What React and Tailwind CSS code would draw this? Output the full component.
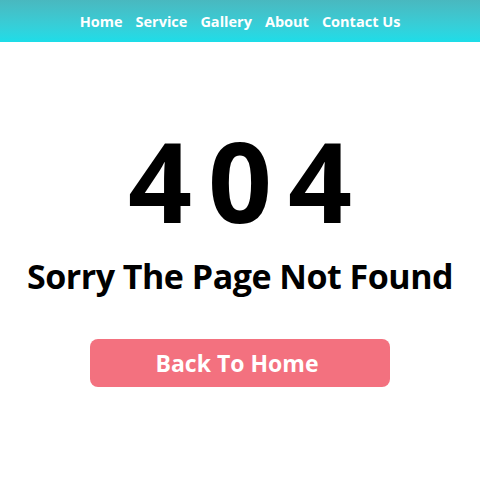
const navLinks = ["Home", "Service", "Gallery", "About", "Contact Us"];

export default function App() {
  return (
    <div className="min-h-[480px] bg-white font-['Open_Sans',sans-serif]">
      <header className="flex h-[42px] items-center justify-center gap-[13px] bg-gradient-to-b from-[#49b8bf] to-[#1cdde8] pt-[2px]">
        {navLinks.map((link) => (
          <a key={link} href="#" className="text-[14.5px] font-bold text-white">
            {link}
          </a>
        ))}
      </header>

      <main className="flex flex-col items-center">
        <h1 className="mt-[76px] pl-[16px] text-[112px] font-bold leading-[124px] tracking-[16px] text-black">
          404
        </h1>
        <h2 className="mt-[12px] text-[34px] font-bold leading-[44px] tracking-[-0.5px] text-black">
          Sorry The Page Not Found
        </h2>
        <button
          type="button"
          className="mt-[41px] flex h-[48px] w-[300px] items-center justify-center rounded-[8px] bg-[#f3717f] pr-[6px] text-[23px] font-bold text-white"
        >
          Back To Home
        </button>
      </main>
    </div>
  );
}
